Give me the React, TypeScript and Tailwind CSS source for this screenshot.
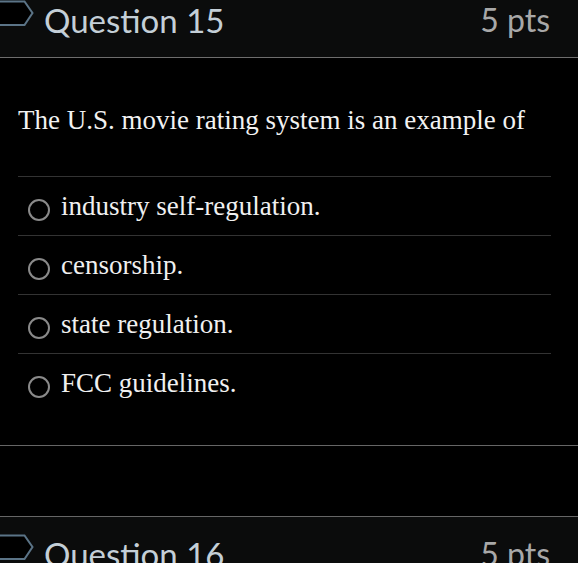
import React from "react";

function Flag() {
  return (
    <svg width="34" height="27" viewBox="0 0 34 27" className="block shrink-0">
      <path d="M-4 1.5 H24.5 L32.5 13 L24.5 25 H-4 Z" fill="#000" stroke="#5b7487" strokeWidth="2" strokeLinejoin="miter" />
    </svg>
  );
}

function Header({ n, pt }: { n: number; pt: string }) {
  return (
    <div className={`bg-[#0b0c0c] flex items-start justify-between pr-[28px] ${pt}`}>
      <div className="flex items-start">
        <Flag />
        <div className="ml-[10px] text-[33px] leading-[40px] text-[#c4cfd7]" style={{ fontFamily: "Lato, sans-serif" }}>
          Question {n}
        </div>
      </div>
      <div className="text-[32px] leading-[40px] text-[#a8a8a8]" style={{ fontFamily: "Lato, sans-serif" }}>
        5 pts
      </div>
    </div>
  );
}

const answers = ["industry self-regulation.", "censorship.", "state regulation.", "FCC guidelines."];

export default function App() {
  return (
    <div className="w-[578px] h-[563px] overflow-hidden bg-black" style={{ fontFamily: '"Liberation Serif", "Times New Roman", serif' }}>
      <div className="h-[58px] bg-[#0b0c0c] border-b border-[#6e6e6e]">
        <Header n={15} pt="pt-0" />
      </div>
      <div className="pl-[18px] pr-[27px] pt-[42px]">
        <div className="text-[27px] leading-[40px] text-[#f2f2f2]">The U.S. movie rating system is an example of</div>
        <div className="mt-[36px]">
          {answers.map((a) => (
            <div key={a} className="h-[59px] border-t border-[#333333] flex items-center">
              <div className="ml-[10px] mt-[8px] w-[22px] h-[22px] rounded-full border-2 border-[#8a8a8a] shrink-0" />
              <div className="ml-[11px] text-[27px] leading-[30px] text-[#f0f0f0]">{a}</div>
            </div>
          ))}
        </div>
      </div>
      <div className="mt-[33px] border-t border-[#666666] h-[71px]" />
      <div className="border-t border-[#666666]">
        <Header n={16} pt="pt-[17px]" />
      </div>
    </div>
  );
}
